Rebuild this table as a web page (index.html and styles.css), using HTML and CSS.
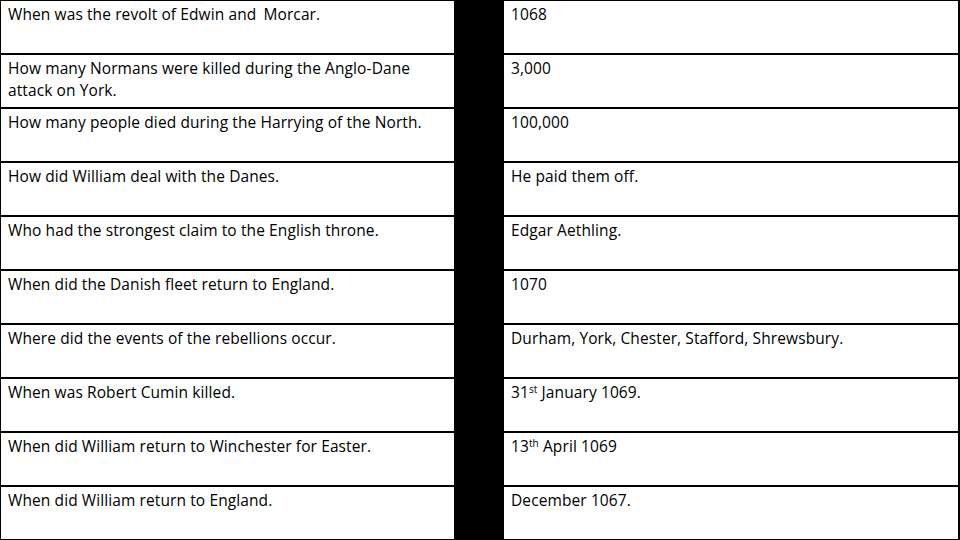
FILE: index.html
```html
<!DOCTYPE html>
<html>
<head>
<meta charset="utf-8">
<link rel="stylesheet" href="styles.css">
</head>
<body>
<div class="table">
  <div class="row"><div class="q">When was the revolt of Edwin and <span class="wide">Morcar.</span></div><div class="gap"></div><div class="a">1068</div></div>
  <div class="row"><div class="q">How many Normans were killed during the Anglo-Dane attack on York.</div><div class="gap"></div><div class="a">3,000</div></div>
  <div class="row"><div class="q">How many people died during the Harrying of the North.</div><div class="gap"></div><div class="a">100,000</div></div>
  <div class="row"><div class="q">How did William deal with the Danes.</div><div class="gap"></div><div class="a">He paid them off.</div></div>
  <div class="row"><div class="q">Who had the strongest claim to the English throne.</div><div class="gap"></div><div class="a">Edgar Aethling.</div></div>
  <div class="row"><div class="q">When did the Danish fleet return to England.</div><div class="gap"></div><div class="a">1070</div></div>
  <div class="row"><div class="q">Where did the events of the rebellions occur.</div><div class="gap"></div><div class="a">Durham, York, Chester, Stafford, Shrewsbury.</div></div>
  <div class="row"><div class="q">When was Robert Cumin killed.</div><div class="gap"></div><div class="a">31<sup>st</sup> January 1069.</div></div>
  <div class="row"><div class="q">When did William return to Winchester for Easter.</div><div class="gap"></div><div class="a">13<sup>th</sup> April 1069</div></div>
  <div class="row"><div class="q">When did William return to England.</div><div class="gap"></div><div class="a">December 1067.</div></div>
</div>
</body>
</html>
```
FILE: styles.css
```css
html, body {
  margin: 0;
  padding: 0;
  background: #ffffff;
}
body {
  width: 960px;
  height: 540px;
  overflow: hidden;
  font-family: "Open Sans", "Liberation Sans", sans-serif;
  font-size: 15.5px;
  letter-spacing: 0.1px;
  color: #000000;
}
.table {
  width: 960px;
  box-sizing: border-box;
  border-top: 1px solid #000;
  border-left: 1px solid #000;
  border-right: 2px solid #000;
}
.row {
  display: flex;
  height: 54px;
  box-sizing: border-box;
  border-bottom: 2px solid #000;
}
.q {
  width: 453px;
  box-sizing: border-box;
  padding: 2px 8px 0 7px;
  line-height: 22px;
}
.wide {
  margin-left: 3px;
}
.gap {
  width: 50px;
  background: #000;
}
.a {
  flex: 1;
  padding: 2px 8px 0 7px;
  line-height: 22px;
}
sup {
  font-size: 10px;
  line-height: 0;
  vertical-align: 5px;
}
```
